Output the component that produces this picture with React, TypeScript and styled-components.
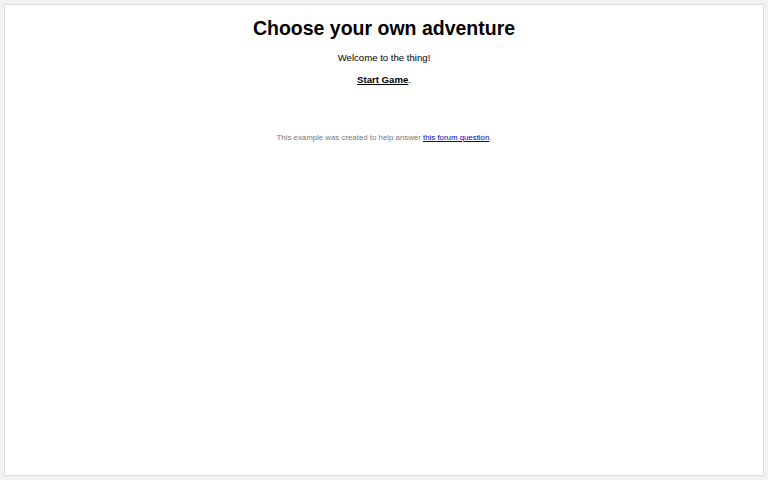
import styled, { createGlobalStyle } from "styled-components";

const GlobalStyle = createGlobalStyle`
  html, body {
    margin: 0;
    padding: 0;
    background: #f2f2f2;
  }
  body {
    font-family: "Liberation Sans", Arial, sans-serif;
  }
`;

const Frame = styled.div`
  box-sizing: border-box;
  margin: 4px;
  height: 472px;
  background: #fff;
  border: 1px solid #dcdcdc;
  padding-top: 12px;
  text-align: center;
  color: #000;
`;

const Title = styled.h1`
  margin: 0 0 11px;
  font-size: 19.5px;
  line-height: 23px;
  font-weight: bold;
`;

const Para = styled.p`
  margin: 0 0 9px;
  font-size: 9.6px;
  line-height: 13px;
`;

const StartLink = styled.a`
  color: #000;
  font-weight: bold;
  text-decoration: underline;
  cursor: pointer;
`;

const Note = styled.p`
  margin: 47px 0 0;
  font-size: 7.85px;
  line-height: 10px;
  color: #777;
`;

const NoteLink = styled.a`
  color: #00c;
  text-decoration: underline;
`;

export default function App() {
  return (
    <>
      <GlobalStyle />
      <Frame>
        <Title>Choose your own adventure</Title>
        <Para>Welcome to the thing!</Para>
        <Para>
          <StartLink>Start Game</StartLink>.
        </Para>
        <Note>
          This example was created to help answer{" "}
          <NoteLink href="#">this forum question</NoteLink>.
        </Note>
      </Frame>
    </>
  );
}
